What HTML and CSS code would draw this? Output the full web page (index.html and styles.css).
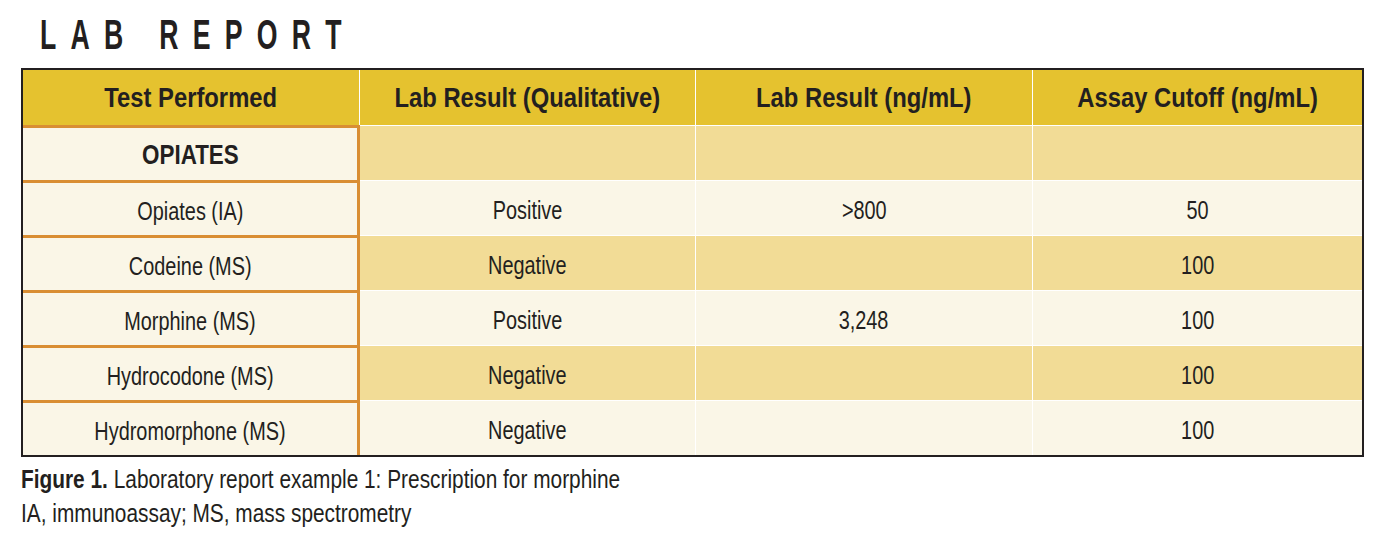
FILE: index.html
```html
<!DOCTYPE html>
<html lang="en">
<head>
<meta charset="utf-8">
<title>Lab Report</title>
<link rel="stylesheet" href="styles.css">
</head>
<body>
<div class="page">
  <h1 class="title">LAB REPORT</h1>
  <table class="report">
    <colgroup>
      <col class="c1"><col class="c2"><col class="c3"><col class="c4">
    </colgroup>
    <thead>
      <tr>
        <th><span class="t">Test Performed</span></th>
        <th><span class="t">Lab Result (Qualitative)</span></th>
        <th><span class="t">Lab Result (ng/mL)</span></th>
        <th><span class="t">Assay Cutoff (ng/mL)</span></th>
      </tr>
    </thead>
    <tbody>
      <tr class="tan">
        <td class="test group"><span class="t">OPIATES</span></td><td></td><td></td><td></td>
      </tr>
      <tr class="cream">
        <td class="test"><span class="t">Opiates (IA)</span></td><td><span class="t">Positive</span></td><td><span class="t">&gt;800</span></td><td><span class="t">50</span></td>
      </tr>
      <tr class="tan">
        <td class="test"><span class="t">Codeine (MS)</span></td><td><span class="t">Negative</span></td><td></td><td><span class="t">100</span></td>
      </tr>
      <tr class="cream">
        <td class="test"><span class="t">Morphine (MS)</span></td><td><span class="t">Positive</span></td><td><span class="t">3,248</span></td><td><span class="t">100</span></td>
      </tr>
      <tr class="tan">
        <td class="test"><span class="t">Hydrocodone (MS)</span></td><td><span class="t">Negative</span></td><td></td><td><span class="t">100</span></td>
      </tr>
      <tr class="cream">
        <td class="test"><span class="t">Hydromorphone (MS)</span></td><td><span class="t">Negative</span></td><td></td><td><span class="t">100</span></td>
      </tr>
    </tbody>
  </table>
  <p class="caption"><strong>Figure 1.</strong> Laboratory report example 1: Prescription for morphine<br>IA, immunoassay; MS, mass spectrometry</p>
</div>
</body>
</html>
```

FILE: styles.css
```css
* { box-sizing: border-box; }

html, body {
  margin: 0;
  padding: 0;
  background: #ffffff;
}

body {
  font-family: "Liberation Sans", Arial, sans-serif;
  color: #231f20;
}

.page {
  padding: 13px 0 0 21px;
}

.title {
  margin: 0 0 12px 0;
  padding-left: 19px;
  font-size: 43px;
  line-height: 43px;
  font-weight: 700;
  letter-spacing: 23px;
  color: #231f20;
  transform: scaleX(0.62);
  transform-origin: 19px 0;
  white-space: nowrap;
}

.report {
  width: 1343px;
  table-layout: fixed;
  border-collapse: separate;
  border-spacing: 0;
  border: 2px solid #231f20;
}

.c1 { width: 337px; }
.c2 { width: 336px; }
.c3 { width: 337px; }
.c4 { width: 329px; }

.report tr { height: 55px; }

.t {
  display: inline-block;
  white-space: nowrap;
  transform-origin: center;
}

.report th {
  background: #e5c22f;
  font-size: 28px;
  line-height: 30px;
  font-weight: 700;
  text-align: center;
  vertical-align: middle;
  padding: 0;
  white-space: nowrap;
  border-right: 1px solid #ffffff;
}

.report th .t { transform: scaleX(0.85); }

.report th:last-child,
.report td:last-child { border-right: none; }

.report td {
  font-size: 26px;
  line-height: 30px;
  font-weight: 400;
  text-align: center;
  vertical-align: middle;
  padding: 3px 0 0 0;
  white-space: nowrap;
  border-top: 1px solid #ffffff;
  border-right: 1px solid #ffffff;
}

.report td .t { transform: scaleX(0.765); }

.report tr.tan td { background: #f2dc96; }
.report tr.cream td { background: #faf6e7; }

.report tr td.test {
  background: #faf6e7;
  border-top: 3px solid #d98e33;
  border-right: 3px solid #d98e33;
}

.report tr td.group {
  font-weight: 700;
  font-size: 28px;
  padding-top: 1px;
}

.report tr td.group .t { transform: scaleX(0.8); }

.caption {
  margin: 5px 0 0 0;
  font-size: 25px;
  line-height: 34px;
  color: #231f20;
  transform: scaleX(0.834);
  transform-origin: 0 0;
  white-space: nowrap;
}

.caption strong { font-weight: 700; }
```
